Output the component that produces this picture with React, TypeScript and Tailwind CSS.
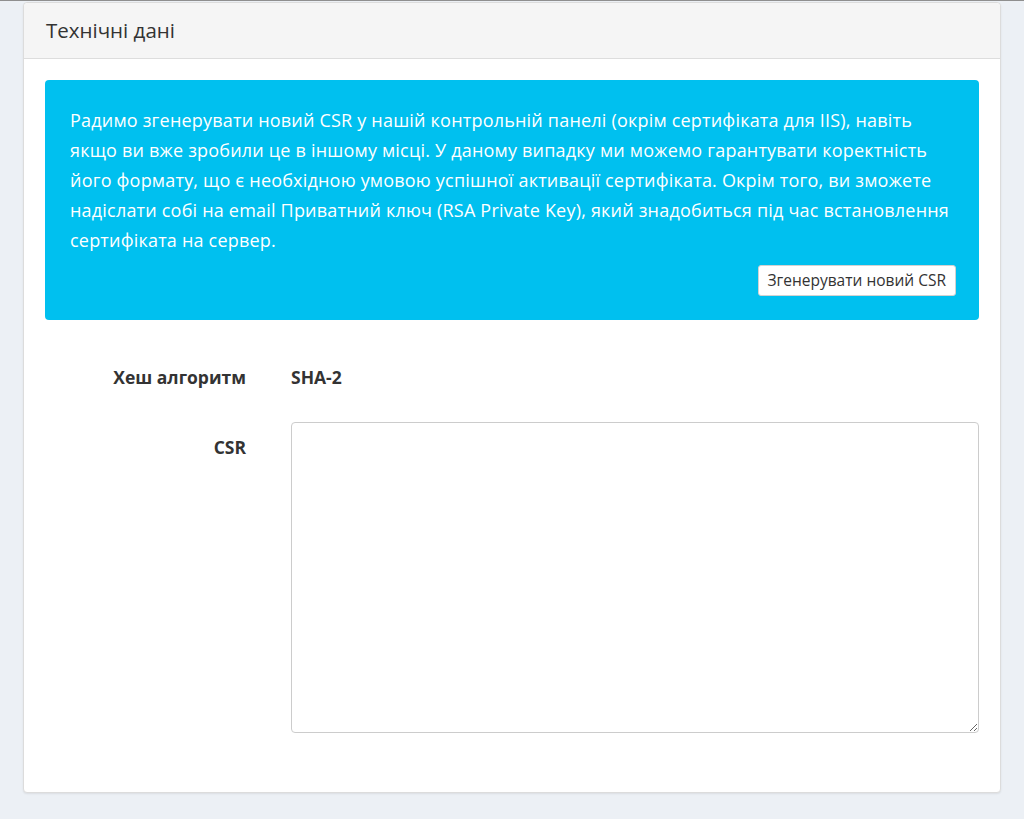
import React, { useState } from 'react';

const App: React.FC = () => {
  const [csr, setCsr] = useState('');

  return (
    <div
      className="min-h-[819px] bg-[#ecf0f5] border-t border-[#8f8f8f] pt-px px-[23px] pb-[25px]"
      style={{ fontFamily: '"Source Sans Pro", "Open Sans", "Noto Sans", sans-serif' }}
    >
      <div className="bg-white rounded-[4px] border border-[#dcdcdc] shadow-[0_1px_2px_rgba(0,0,0,0.08)]">
        <div className="h-[56px] flex items-center px-[22px] bg-[#f5f5f5] border-b border-[#dddddd] rounded-t-[4px]">
          <h3 className="text-[20.5px] text-[#333333]">Технічні дані</h3>
        </div>

        <div className="px-[21px] pt-[21px] pb-[59px]">
          <div className="bg-[#00c0ef] rounded-[4px] text-white pl-[25px] pr-[20px] pt-[25px] pb-[24px]">
            <p className="text-[18px] leading-[30px] tracking-[0.2px] whitespace-nowrap">
              Радимо згенерувати новий CSR у нашій контрольній панелі (окрім сертифіката для IIS), навіть
              <br />
              якщо ви вже зробили це в іншому місці. У даному випадку ми можемо гарантувати коректність
              <br />
              його формату, що є необхідною умовою успішної активації сертифіката. Окрім того, ви зможете
              <br />
              надіслати собі на email Приватний ключ (RSA Private Key), який знадобиться під час встановлення
              <br />
              сертифіката на сервер.
            </p>
            <div className="flex justify-end mt-[10px] pr-[3px]">
              <button className="h-[31px] px-[9px] bg-white text-[#333333] text-[15.5px] rounded-[3px] border border-[#d2d2d2]">
                Згенерувати новий CSR
              </button>
            </div>
          </div>

          <div className="mt-[45px] flex flex-col gap-[33px]">
            <div className="flex items-start">
              <div className="w-[246px] pr-[45px] text-right text-[17.5px] font-bold text-[#333333] leading-[24px]">
                Хеш алгоритм
              </div>
              <div className="text-[17.5px] font-bold text-[#333333] leading-[24px]">SHA-2</div>
            </div>
            <div className="flex items-start">
              <div className="w-[246px] pr-[45px] pt-[13px] text-right text-[17.5px] font-bold text-[#333333] leading-[24px]">
                CSR
              </div>
              <textarea
                value={csr}
                onChange={(e) => setCsr(e.target.value)}
                className="flex-1 h-[311px] border border-[#cccccc] rounded-[4px] px-3 py-2 text-[14px] text-[#333] focus:outline-none"
              />
            </div>
          </div>
        </div>
      </div>
    </div>
  );
};

export default App;
